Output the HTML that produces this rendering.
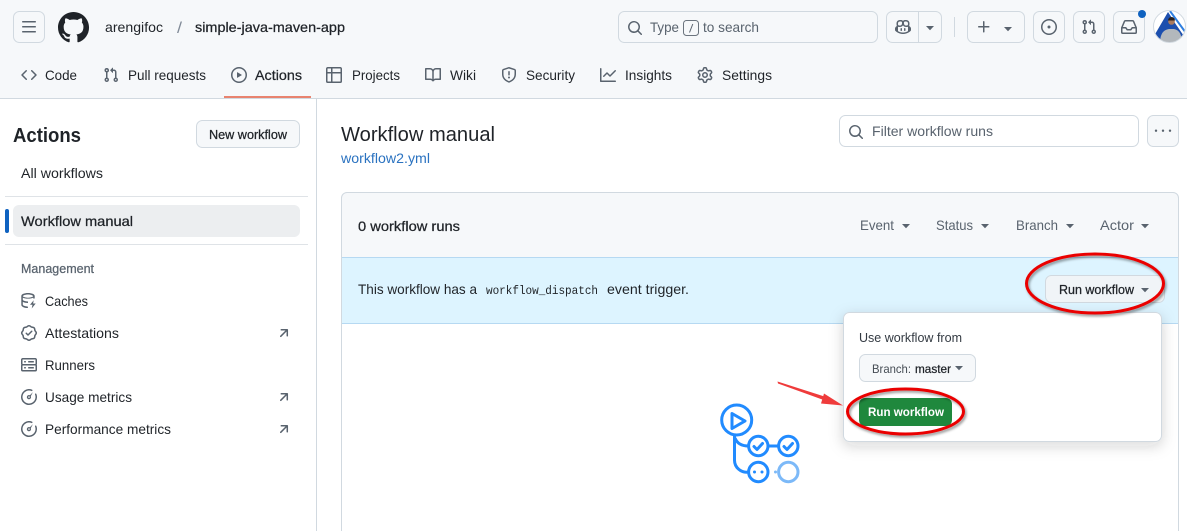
<!DOCTYPE html>
<html lang="en"><head><meta charset="utf-8"><title>Workflow manual</title>
<style>
html,body{margin:0;padding:0;background:#fff;width:1187px;height:531px;overflow:hidden}
svg{display:block}
text{font-family:"Liberation Sans",sans-serif;font-size:14px;fill:#1f2328}
.m{fill:#59636e}
.b{font-weight:700}
.md{stroke:#1f2328;stroke-width:.25}
.ic{fill:#59636e}
.btn{fill:#f6f8fa;stroke:#d1d9e0}
</style></head><body>
<svg width="1187" height="531" viewBox="0 0 1187 531" xmlns="http://www.w3.org/2000/svg">
<defs>
<path id="bars" d="M1 2.75A.75.75 0 0 1 1.75 2h12.5a.75.75 0 0 1 0 1.5H1.75A.75.75 0 0 1 1 2.75Zm0 5A.75.75 0 0 1 1.75 7h12.5a.75.75 0 0 1 0 1.5H1.75A.75.75 0 0 1 1 7.75ZM1.75 12h12.5a.75.75 0 0 1 0 1.5H1.75a.75.75 0 0 1 0-1.5Z"/>
<path id="gh" d="M8 0c4.42 0 8 3.58 8 8a8.013 8.013 0 0 1-5.45 7.59c-.4.08-.55-.17-.55-.38 0-.27.01-1.13.01-2.2 0-.75-.25-1.23-.54-1.48 1.78-.2 3.65-.88 3.65-3.95 0-.88-.31-1.59-.82-2.15.08-.2.36-1.02-.08-2.12 0 0-.67-.22-2.2.82-.64-.18-1.32-.27-2-.27-.68 0-1.36.09-2 .27-1.53-1.03-2.2-.82-2.2-.82-.44 1.1-.16 1.92-.08 2.12-.51.56-.82 1.28-.82 2.15 0 3.06 1.86 3.75 3.64 3.95-.23.2-.44.55-.51 1.07-.46.21-1.61.55-2.33-.66-.15-.24-.6-.83-1.23-.82-.67.01-.27.38.01.53.34.19.73.9.82 1.13.16.45.68 1.31 2.69.94 0 .67.01 1.3.01 1.49 0 .21-.15.45-.55.38A7.995 7.995 0 0 1 0 8c0-4.42 3.58-8 8-8Z"/>
<path id="code" d="m11.28 3.22 4.25 4.25a.75.75 0 0 1 0 1.06l-4.25 4.25a.749.749 0 0 1-1.275-.326.749.749 0 0 1 .215-.734L13.94 8l-3.72-3.72a.749.749 0 0 1 .326-1.275.749.749 0 0 1 .734.215Zm-6.56 0a.751.751 0 0 1 1.042.018.751.751 0 0 1 .018 1.042L2.06 8l3.72 3.72a.749.749 0 0 1-.326 1.275.749.749 0 0 1-.734-.215L.47 8.53a.75.75 0 0 1 0-1.06Z"/>
<path id="pr" d="M1.5 3.25a2.25 2.25 0 1 1 3 2.122v5.256a2.251 2.251 0 1 1-1.5 0V5.372A2.25 2.25 0 0 1 1.5 3.25Zm5.677-.177L9.573.677A.25.25 0 0 1 10 .854V2.5h1A2.5 2.5 0 0 1 13.5 5v5.628a2.251 2.251 0 1 1-1.5 0V5a1 1 0 0 0-1-1h-1v1.646a.25.25 0 0 1-.427.177L7.177 3.427a.25.25 0 0 1 0-.354ZM3.75 2.5a.75.75 0 1 0 0 1.5.75.75 0 0 0 0-1.5Zm0 9.5a.75.75 0 1 0 0 1.5.75.75 0 0 0 0-1.5Zm8.25.75a.75.75 0 1 0 1.5 0 .75.75 0 0 0-1.5 0Z"/>
<path id="play" d="M8 0a8 8 0 1 1 0 16A8 8 0 0 1 8 0ZM1.5 8a6.5 6.5 0 1 0 13 0 6.5 6.5 0 0 0-13 0Zm4.879-2.773 4.264 2.559a.25.25 0 0 1 0 .428l-4.264 2.559A.25.25 0 0 1 6 10.559V5.442a.25.25 0 0 1 .379-.215Z"/>
<path id="table" d="M0 1.75C0 .784.784 0 1.75 0h12.5C15.216 0 16 .784 16 1.75v12.5A1.75 1.75 0 0 1 14.25 16H1.75A1.75 1.75 0 0 1 0 14.25ZM6.5 6.5v8h7.75a.25.25 0 0 0 .25-.25V6.5Zm8-1.5V1.75a.25.25 0 0 0-.25-.25H6.5V5Zm-13 1.5v7.75c0 .138.112.25.25.25H5v-8ZM5 5V1.5H1.75a.25.25 0 0 0-.25.25V5Z"/>
<path id="book" d="M0 1.75A.75.75 0 0 1 .75 1h4.253c1.227 0 2.317.59 3 1.501A3.743 3.743 0 0 1 11.006 1h4.245a.75.75 0 0 1 .75.75v10.5a.75.75 0 0 1-.75.75h-4.507a2.25 2.25 0 0 0-1.591.659l-.622.621a.75.75 0 0 1-1.06 0l-.622-.621A2.25 2.25 0 0 0 5.258 13H.75a.75.75 0 0 1-.75-.75Zm7.251 10.324.004-5.073-.002-2.253A2.25 2.25 0 0 0 5.003 2.5H1.5v9h3.757a3.75 3.75 0 0 1 1.994.574ZM8.755 4.75l-.004 7.322a3.752 3.752 0 0 1 1.992-.572H14.5v-9h-3.495a2.25 2.25 0 0 0-2.25 2.25Z"/>
<path id="shield" d="M7.467.133a1.748 1.748 0 0 1 1.066 0l5.25 1.68A1.75 1.75 0 0 1 15 3.48V7c0 1.566-.32 3.182-1.303 4.682-.983 1.498-2.585 2.813-5.032 3.855a1.697 1.697 0 0 1-1.33 0c-2.447-1.042-4.049-2.357-5.032-3.855C1.32 10.182 1 8.566 1 7V3.48a1.75 1.75 0 0 1 1.217-1.667Zm.61 1.429a.25.25 0 0 0-.153 0l-5.25 1.68a.25.25 0 0 0-.174.238V7c0 1.358.275 2.666 1.057 3.86.784 1.194 2.121 2.34 4.366 3.297a.196.196 0 0 0 .154 0c2.245-.956 3.582-2.104 4.366-3.298C13.225 9.666 13.5 8.36 13.5 7V3.48a.251.251 0 0 0-.174-.237l-5.25-1.68ZM8.75 4.75v3a.75.75 0 0 1-1.5 0v-3a.75.75 0 0 1 1.5 0ZM9 10.5a1 1 0 1 1-2 0 1 1 0 0 1 2 0Z"/>
<path id="graph" d="M1.5 1.75V13.5h13.75a.75.75 0 0 1 0 1.5H.75a.75.75 0 0 1-.75-.75V1.75a.75.75 0 0 1 1.5 0Zm14.28 2.53-5.25 5.25a.75.75 0 0 1-1.06 0L7 7.06 4.28 9.78a.751.751 0 0 1-1.042-.018.751.751 0 0 1-.018-1.042l3.25-3.25a.75.75 0 0 1 1.06 0L10 7.94l4.72-4.72a.751.751 0 0 1 1.042.018.751.751 0 0 1 .018 1.042Z"/>
<path id="gear" d="M8 0a8.2 8.2 0 0 1 .701.031C9.444.095 9.99.645 10.16 1.29l.288 1.107c.018.066.079.158.212.224.231.114.454.243.668.386.123.082.233.09.299.071l1.103-.303c.644-.176 1.392.021 1.82.63.27.385.506.792.704 1.218.315.675.111 1.422-.364 1.891l-.814.806c-.049.048-.098.147-.088.294.016.257.016.515 0 .772-.01.147.038.246.088.294l.814.806c.475.469.679 1.216.364 1.891a7.977 7.977 0 0 1-.704 1.217c-.428.61-1.176.807-1.82.63l-1.102-.302c-.067-.019-.177-.011-.3.071a5.909 5.909 0 0 1-.668.386c-.133.066-.194.158-.211.224l-.29 1.106c-.168.646-.715 1.196-1.458 1.26a8.006 8.006 0 0 1-1.402 0c-.743-.064-1.289-.614-1.458-1.26l-.289-1.106c-.018-.066-.079-.158-.212-.224a5.738 5.738 0 0 1-.668-.386c-.123-.082-.233-.09-.299-.071l-1.103.303c-.644.176-1.392-.021-1.82-.63a8.12 8.12 0 0 1-.704-1.218c-.315-.675-.111-1.422.363-1.891l.815-.806c.05-.048.098-.147.088-.294a6.214 6.214 0 0 1 0-.772c.01-.147-.038-.246-.088-.294l-.815-.806C.635 6.045.431 5.298.746 4.623a7.92 7.92 0 0 1 .704-1.217c.428-.61 1.176-.807 1.82-.63l1.102.302c.067.019.177.011.3-.071.214-.143.437-.272.668-.386.133-.066.194-.158.211-.224l.29-1.106C6.009.645 6.556.095 7.299.03 7.53.01 7.764 0 8 0Zm-.571 1.525c-.036.003-.108.036-.137.146l-.289 1.105c-.147.561-.549.967-.998 1.189-.173.086-.34.183-.5.29-.417.278-.97.423-1.529.27l-1.103-.303c-.109-.03-.175.016-.195.045-.22.312-.412.644-.573.99-.014.031-.021.11.059.19l.815.806c.411.406.562.957.53 1.456a4.709 4.709 0 0 0 0 .582c.032.499-.119 1.05-.53 1.456l-.815.806c-.081.08-.073.159-.059.19.162.346.353.677.573.989.02.03.085.076.195.046l1.102-.303c.56-.153 1.113-.008 1.53.27.161.107.328.204.501.29.447.222.85.629.997 1.189l.289 1.105c.029.109.101.143.137.146a6.6 6.6 0 0 0 1.142 0c.036-.003.108-.036.137-.146l.289-1.105c.147-.561.549-.967.998-1.189.173-.086.34-.183.5-.29.417-.278.97-.423 1.529-.27l1.103.303c.109.029.175-.016.195-.045.22-.313.411-.644.573-.99.014-.031.021-.11-.059-.19l-.815-.806c-.411-.406-.562-.957-.53-1.456a4.709 4.709 0 0 0 0-.582c-.032-.499.119-1.05.53-1.456l.815-.806c.081-.08.073-.159.059-.19a6.464 6.464 0 0 0-.573-.989c-.02-.03-.085-.076-.195-.046l-1.102.303c-.56.153-1.113.008-1.53-.27a4.44 4.44 0 0 0-.501-.29c-.447-.222-.85-.629-.997-1.189l-.289-1.105c-.029-.11-.101-.143-.137-.146a6.6 6.6 0 0 0-1.142 0ZM11 8a3 3 0 1 1-6 0 3 3 0 0 1 6 0ZM9.5 8a1.5 1.5 0 1 0-3.001.001A1.5 1.5 0 0 0 9.5 8Z"/>
<path id="search" d="M10.68 11.74a6 6 0 0 1-7.922-8.982 6 6 0 0 1 8.982 7.922l3.04 3.04a.749.749 0 0 1-.326 1.275.749.749 0 0 1-.734-.215ZM11.5 7a4.499 4.499 0 1 0-8.997 0A4.499 4.499 0 0 0 11.5 7Z"/>
<path id="copilot" d="M7.998 15.035c-4.562 0-7.873-2.914-7.998-3.749V9.338c.085-.628.677-1.686 1.588-2.065.013-.07.024-.143.036-.218.029-.183.06-.384.126-.612-.201-.508-.254-1.084-.254-1.656 0-.87.128-1.769.693-2.484.579-.733 1.494-1.124 2.724-1.261 1.206-.134 2.262.034 2.944.765.05.053.096.108.139.165.044-.057.094-.112.143-.165.682-.731 1.738-.899 2.944-.765 1.23.137 2.145.528 2.724 1.261.566.715.693 1.614.693 2.484 0 .572-.053 1.148-.254 1.656.066.228.098.429.126.612.012.076.024.148.037.218.924.385 1.522 1.471 1.591 2.095v1.872c0 .766-3.351 3.795-8.002 3.795Zm0-1.485c2.28 0 4.584-1.11 5.002-1.433V7.862l-.023-.116c-.49.21-1.075.291-1.727.291-1.146 0-2.059-.327-2.71-.991A3.222 3.222 0 0 1 8 6.303a3.24 3.24 0 0 1-.544.743c-.65.664-1.563.991-2.71.991-.652 0-1.236-.081-1.727-.291l-.023.116v4.255c.419.323 2.722 1.433 5.002 1.433ZM6.762 2.83c-.193-.206-.637-.413-1.682-.297-1.019.113-1.479.404-1.713.7-.247.312-.369.789-.369 1.554 0 .793.129 1.171.308 1.371.162.181.519.379 1.442.379.853 0 1.339-.235 1.638-.54.315-.322.527-.827.617-1.553.117-.935-.037-1.395-.241-1.614Zm4.155-.297c-1.044-.116-1.488.091-1.681.297-.204.219-.359.679-.242 1.614.091.726.303 1.231.618 1.553.299.305.784.54 1.638.54.922 0 1.28-.198 1.442-.379.179-.2.308-.578.308-1.371 0-.765-.123-1.242-.37-1.554-.233-.296-.693-.587-1.713-.7ZM6.25 9.037a.75.75 0 0 1 .75.75v1.501a.75.75 0 0 1-1.5 0V9.787a.75.75 0 0 1 .75-.75Zm4.25.75v1.501a.75.75 0 0 1-1.5 0V9.787a.75.75 0 0 1 1.5 0Z"/>
<path id="plus" d="M7.75 2a.75.75 0 0 1 .75.75V7h4.25a.75.75 0 0 1 0 1.5H8.5v4.25a.75.75 0 0 1-1.5 0V8.5H2.75a.75.75 0 0 1 0-1.5H7V2.75A.75.75 0 0 1 7.75 2Z"/>
<path id="issue" d="M8 9.5a1.5 1.5 0 1 0 0-3 1.5 1.5 0 0 0 0 3ZM8 0a8 8 0 1 1 0 16A8 8 0 0 1 8 0ZM1.5 8a6.5 6.5 0 1 0 13 0 6.5 6.5 0 0 0-13 0Z"/>
<path id="inbox" d="M2.8 2.06A1.75 1.75 0 0 1 4.41 1h7.18c.7 0 1.333.417 1.61 1.06l2.74 6.395c.04.093.06.194.06.295v4.5A1.75 1.75 0 0 1 14.25 15H1.75A1.75 1.75 0 0 1 0 13.25v-4.5c0-.101.02-.202.06-.295Zm1.61.44a.25.25 0 0 0-.23.152L1.887 8H4.75a.75.75 0 0 1 .6.3L6.625 10h2.75l1.275-1.7a.75.75 0 0 1 .6-.3h2.863L11.82 2.652a.25.25 0 0 0-.23-.152Zm10.09 7h-2.875l-1.275 1.7a.75.75 0 0 1-.6.3h-3.5a.75.75 0 0 1-.6-.3L4.375 9.5H1.5v3.75c0 .138.112.25.25.25h12.5a.25.25 0 0 0 .25-.25Z"/>
<path id="verified" d="M9.585.52a2.678 2.678 0 0 0-3.17 0l-.928.68a1.178 1.178 0 0 1-.518.215L3.83 1.59a2.678 2.678 0 0 0-2.24 2.24l-.175 1.14a1.178 1.178 0 0 1-.215.518l-.68.928a2.678 2.678 0 0 0 0 3.17l.68.928c.113.153.186.33.215.518l.175 1.138a2.678 2.678 0 0 0 2.24 2.24l1.138.175c.187.029.365.102.518.215l.928.68a2.678 2.678 0 0 0 3.17 0l.928-.68a1.17 1.17 0 0 1 .518-.215l1.138-.175a2.678 2.678 0 0 0 2.241-2.241l.175-1.138c.029-.187.102-.365.215-.518l.68-.928a2.678 2.678 0 0 0 0-3.17l-.68-.928a1.179 1.179 0 0 1-.215-.518L14.41 3.83a2.678 2.678 0 0 0-2.24-2.24l-1.138-.175a1.179 1.179 0 0 1-.518-.215L9.585.52ZM7.303 1.728c.415-.305.98-.305 1.394 0l.928.68c.348.256.752.423 1.18.489l1.136.174c.51.078.909.478.987.987l.174 1.137c.066.427.233.831.489 1.18l.68.927c.305.415.305.98 0 1.394l-.68.928a2.678 2.678 0 0 0-.489 1.18l-.174 1.136a1.178 1.178 0 0 1-.987.987l-1.137.174a2.678 2.678 0 0 0-1.18.489l-.927.68c-.415.305-.98.305-1.394 0l-.928-.68a2.678 2.678 0 0 0-1.18-.489l-1.136-.174a1.178 1.178 0 0 1-.987-.987l-.174-1.137a2.678 2.678 0 0 0-.489-1.18l-.68-.927a1.178 1.178 0 0 1 0-1.394l.68-.928c.256-.348.423-.752.489-1.18l.174-1.136c.078-.51.478-.909.987-.987l1.137-.174a2.678 2.678 0 0 0 1.18-.489l.927-.68ZM11.28 6.78a.75.75 0 0 0-1.06-1.06L7 8.94 5.78 7.72a.75.75 0 0 0-1.06 1.06l1.75 1.75a.75.75 0 0 0 1.06 0l3.75-3.75Z"/>
<path id="server" d="M1.75 1h12.5c.966 0 1.75.784 1.75 1.75v4c0 .372-.116.717-.314 1 .198.283.314.628.314 1v4a1.75 1.75 0 0 1-1.75 1.75H1.75A1.75 1.75 0 0 1 0 12.75v-4c0-.358.109-.707.314-1a1.739 1.739 0 0 1-.314-1v-4C0 1.784.784 1 1.75 1ZM1.5 2.75v4c0 .138.112.25.25.25h12.5a.25.25 0 0 0 .25-.25v-4a.25.25 0 0 0-.25-.25H1.75a.25.25 0 0 0-.25.25Zm.25 5.75a.25.25 0 0 0-.25.25v4c0 .138.112.25.25.25h12.5a.25.25 0 0 0 .25-.25v-4a.25.25 0 0 0-.25-.25ZM7 4.75A.75.75 0 0 1 7.75 4h4.5a.75.75 0 0 1 0 1.5h-4.5A.75.75 0 0 1 7 4.75ZM7.75 10h4.5a.75.75 0 0 1 0 1.5h-4.5a.75.75 0 0 1 0-1.5ZM3 4.75A.75.75 0 0 1 3.75 4h.5a.75.75 0 0 1 0 1.5h-.5A.75.75 0 0 1 3 4.75ZM3.75 10h.5a.75.75 0 0 1 0 1.5h-.5a.75.75 0 0 1 0-1.5Z"/>
<g id="meter"><path d="M8 1.5a6.5 6.5 0 1 0 6.016 4.035.75.75 0 0 1 1.388-.57A8 8 0 1 1 11.035.596a.75.75 0 1 1-.57 1.388A6.48 6.48 0 0 0 8 1.5Z"/><path d="M11.9 3.1 8.9 6.3a2.1 2.1 0 1 0 .9.9ZM8 7.3a.8.8 0 1 1 0 1.6.8.8 0 0 1 0-1.6Z"/></g>
<g id="cache"><path d="M7 0c1.8 0 3.4.3 4.6.8 1.1.5 2.1 1.2 2.1 2.3v2.4h-1.5V4.6c-1.2.7-3.1 1-5.2 1s-4-.3-5.2-1v2.2c0 .2.3.6 1.2 1 1 .4 2.4.7 4 .7v1.5c-2 0-3.9-.4-5.2-1.1v2.9c0 .2.3.6 1.2 1 .9.4 2.2.7 3.7.7l.3 1.5c-1.8 0-3.3-.3-4.6-.8C1.3 13.700.3 13 .3 11.900V3.100C.3 2 1.300 1.300 2.400.8 3.600.3 5.200 0 7 0Zm0 1.500c-1.600 0-3 .3-4 .7-.9.4-1.200.8-1.200.9s.3.5 1.200.9c1 .4 2.400.7 4 .7s3-.3 4-.7c.9-.4 1.200-.8 1.200-.9s-.3-.5-1.200-.9c-1-.4-2.400-.7-4-.7Z"/><path d="M12.700 7.200 9 11.800h2.500l-.8 3.700 4-5h-2.600Z"/></g>
<path id="arr" d="M4.530 4.750A.75.75 0 0 1 5.280 4h6.010a.75.75 0 0 1 .75.75v6.010a.75.75 0 0 1-1.500 0v-4.200l-5.260 5.261a.749.749 0 0 1-1.275-.326.749.749 0 0 1 .215-.734L9.480 5.500h-4.200a.75.75 0 0 1-.75-.75Z"/>
<path id="caret" d="M0 0h8L4 4.300Z"/>
<filter id="pop" x="-10%" y="-10%" width="120%" height="125%"><feDropShadow dx="0" dy="4" stdDeviation="7" flood-color="#25292e" flood-opacity=".18"/></filter>
<filter id="rs" x="-10%" y="-15%" width="120%" height="135%"><feDropShadow dx="1.500" dy="2" stdDeviation="1.200" flood-color="#000" flood-opacity=".4"/></filter>
<clipPath id="av"><circle cx="1169.500" cy="26.500" r="16"/></clipPath>
<clipPath id="boxc"><path d="M341 531V198a6 6 0 0 1 6-6h826a6 6 0 0 1 6 6v333Z"/></clipPath>
</defs>

<!-- header -->
<rect width="1187" height="98" fill="#f6f8fa"/>
<rect y="98" width="1187" height="1" fill="#d1d9e0"/>
<rect x="13.500" y="11.500" width="31" height="31" rx="6" class="btn"/>
<use href="#bars" x="21" y="19" class="ic"/>
<use href="#gh" transform="translate(58 12) scale(1.94)" fill="#1f2328"/>
<text x="105" y="32" textLength="58" lengthAdjust="spacingAndGlyphs">arengifoc</text>
<text x="177" y="33" textLength="5" lengthAdjust="spacingAndGlyphs" style="font-size:16px;fill:#818b98">/</text>
<text x="195" y="32" textLength="150" lengthAdjust="spacingAndGlyphs" class="md">simple-java-maven-app</text>

<!-- tabs -->
<use href="#code" x="21" y="67" class="ic"/><text x="45" y="80" textLength="32" lengthAdjust="spacingAndGlyphs">Code</text>
<use href="#pr" x="103" y="67" class="ic"/><text x="128" y="80" textLength="78" lengthAdjust="spacingAndGlyphs">Pull requests</text>
<use href="#play" x="231" y="67" class="ic"/><text x="255" y="80" textLength="47" lengthAdjust="spacingAndGlyphs" class="md">Actions</text>
<rect x="224" y="96" width="87" height="2" fill="#e8836f"/>
<use href="#table" x="326" y="67" class="ic"/><text x="352" y="80" textLength="48" lengthAdjust="spacingAndGlyphs">Projects</text>
<use href="#book" x="425" y="67" class="ic"/><text x="450" y="80" textLength="26" lengthAdjust="spacingAndGlyphs">Wiki</text>
<use href="#shield" x="501" y="67" class="ic"/><text x="526" y="80" textLength="49" lengthAdjust="spacingAndGlyphs">Security</text>
<use href="#graph" x="600" y="67" class="ic"/><text x="625" y="80" textLength="47" lengthAdjust="spacingAndGlyphs">Insights</text>
<use href="#gear" x="697" y="67" class="ic"/><text x="722" y="80" textLength="50" lengthAdjust="spacingAndGlyphs">Settings</text>

<!-- search -->
<rect x="618.500" y="11.500" width="259" height="31" rx="6" fill="#f6f8fa" stroke="#d1d9e0"/>
<use href="#search" x="627" y="20" class="ic"/>
<text x="650" y="32" textLength="29" lengthAdjust="spacingAndGlyphs" class="m">Type</text>
<rect x="683.500" y="20.500" width="15" height="15" rx="3" fill="none" stroke="#6b747e"/>
<path d="M692.800 24 689.500 32.500" stroke="#59636e" fill="none"/>
<text x="703" y="32" textLength="56" lengthAdjust="spacingAndGlyphs" class="m">to search</text>

<!-- copilot -->
<rect x="886.500" y="11.500" width="55" height="31" rx="6" class="btn"/>
<rect x="918" y="12" width="1" height="30" fill="#d1d9e0"/>
<use href="#copilot" x="895" y="19" class="ic"/>
<use href="#caret" x="926" y="26" class="ic"/>
<rect x="954" y="17" width="1" height="20" fill="#d1d9e0"/>
<rect x="967.500" y="11.500" width="57" height="31" rx="6" class="btn"/>
<use href="#plus" x="976" y="19" class="ic"/>
<use href="#caret" x="1004" y="27" class="ic"/>
<rect x="1033.500" y="11.500" width="31" height="31" rx="6" class="btn"/>
<use href="#issue" x="1041" y="19" class="ic"/>
<rect x="1073.500" y="11.500" width="31" height="31" rx="6" class="btn"/>
<use href="#pr" x="1081" y="19" class="ic"/>
<rect x="1113.500" y="11.500" width="31" height="31" rx="6" class="btn"/>
<use href="#inbox" x="1121" y="19" class="ic"/>
<circle cx="1142" cy="14" r="4" fill="#0f62c0"/>

<!-- avatar -->
<circle cx="1169.500" cy="26.500" r="16" fill="#fff"/>
<g clip-path="url(#av)">
<path d="M1154 36 1168 12 1184 36 1170 44Z" fill="#1c4fae"/>
<path d="M1170 11 1186 33" stroke="#2f7fe0" stroke-width="2"/>
<path d="M1175 22 1184 35" stroke="#fff" stroke-width="1.200"/>
<path d="M1160 44c0-10 3-14 9-15h5c5 1 8 5 8 15Z" fill="#b3b8bc"/>
<circle cx="1171.500" cy="21.500" r="3.300" fill="#a97a5e"/>
<path d="M1168 20.500a3.500 3.500 0 0 1 7 0Z" fill="#2a211c"/>
</g>
<circle cx="1169.500" cy="26.500" r="16" fill="none" stroke="#d1d9e0"/>

<!-- sidebar -->
<rect x="316" y="99" width="1" height="432" fill="#d1d9e0"/>
<text x="13" y="142" textLength="68" lengthAdjust="spacingAndGlyphs" class="b" style="font-size:20px">Actions</text>
<rect x="196.500" y="120.500" width="103" height="27" rx="6" class="btn"/>
<text x="209" y="139" textLength="78" lengthAdjust="spacingAndGlyphs" class="md" style="font-size:12.500px">New workflow</text>
<text x="21" y="178" textLength="82" lengthAdjust="spacingAndGlyphs">All workflows</text>
<rect x="5" y="196" width="303" height="1" fill="#dfe3e7"/>
<rect x="13" y="205" width="287" height="32" rx="6" fill="#eceef0"/>
<rect x="5" y="209" width="4" height="24" rx="2" fill="#0f62c0"/>
<text x="21" y="226" textLength="112" lengthAdjust="spacingAndGlyphs" class="md">Workflow manual</text>
<rect x="5" y="244" width="303" height="1" fill="#dfe3e7"/>
<text x="21" y="273" textLength="73" lengthAdjust="spacingAndGlyphs" class="m" style="font-size:12.500px;stroke:#59636e;stroke-width:.25">Management</text>

<use href="#cache" x="21" y="293" class="ic"/><text x="45" y="306" textLength="43" lengthAdjust="spacingAndGlyphs">Caches</text>
<use href="#verified" x="21" y="325" class="ic"/><text x="45" y="338" textLength="74" lengthAdjust="spacingAndGlyphs">Attestations</text>
<use href="#arr" x="276" y="325" class="ic"/>
<use href="#server" x="21" y="357" class="ic"/><text x="45" y="370" textLength="50" lengthAdjust="spacingAndGlyphs">Runners</text>
<use href="#meter" x="21" y="389" class="ic"/><text x="45" y="402" textLength="87" lengthAdjust="spacingAndGlyphs">Usage metrics</text>
<use href="#arr" x="276" y="389" class="ic"/>
<use href="#meter" x="21" y="421" class="ic"/><text x="45" y="434" textLength="126" lengthAdjust="spacingAndGlyphs">Performance metrics</text>
<use href="#arr" x="276" y="421" class="ic"/>

<!-- main title -->
<text x="341" y="141" textLength="154" lengthAdjust="spacingAndGlyphs" style="font-size:20px">Workflow manual</text>
<text x="341" y="163" textLength="89" lengthAdjust="spacingAndGlyphs" style="fill:#2a72c0">workflow2.yml</text>
<rect x="839.500" y="115.500" width="299" height="31" rx="6" fill="#fff" stroke="#d1d9e0"/>
<use href="#search" x="848" y="124" class="ic"/>
<text x="872" y="136" textLength="121" lengthAdjust="spacingAndGlyphs" class="m">Filter workflow runs</text>
<rect x="1147.500" y="115.500" width="31" height="31" rx="6" class="btn"/>
<circle cx="1156" cy="130.700" r="1.200" class="ic"/><circle cx="1163" cy="130.700" r="1.200" class="ic"/><circle cx="1170" cy="130.700" r="1.200" class="ic"/>

<!-- box -->
<g clip-path="url(#boxc)">
<rect x="341" y="192" width="838" height="65" fill="#f6f8fa"/>
<rect x="341" y="257" width="838" height="66" fill="#ddf4ff"/>
<rect x="341" y="257" width="838" height="1" fill="#b6d9f2"/>
<rect x="341" y="323" width="838" height="1" fill="#b6d9f2"/>
</g>
<path d="M341.500 531V198a5.500 5.500 0 0 1 5.500-5.500h826a5.500 5.500 0 0 1 5.500 5.500v333" fill="none" stroke="#d1d9e0"/>
<text x="358" y="231" textLength="102" lengthAdjust="spacingAndGlyphs" class="md">0 workflow runs</text>
<text x="860" y="230" textLength="34" lengthAdjust="spacingAndGlyphs" class="m">Event</text><use href="#caret" x="902" y="224" class="ic"/>
<text x="936" y="230" textLength="37" lengthAdjust="spacingAndGlyphs" class="m">Status</text><use href="#caret" x="981" y="224" class="ic"/>
<text x="1016" y="230" textLength="42" lengthAdjust="spacingAndGlyphs" class="m">Branch</text><use href="#caret" x="1066" y="224" class="ic"/>
<text x="1100" y="230" textLength="34" lengthAdjust="spacingAndGlyphs" class="m">Actor</text><use href="#caret" x="1141" y="224" class="ic"/>

<text x="358" y="294" textLength="119" lengthAdjust="spacingAndGlyphs">This workflow has a</text>
<text x="486" y="294" textLength="112" lengthAdjust="spacingAndGlyphs" style="font-family:'Liberation Mono',monospace;font-size:12px">workflow_dispatch</text>
<text x="607" y="294" textLength="82" lengthAdjust="spacingAndGlyphs">event trigger.</text>

<!-- run workflow button -->
<rect x="1045.500" y="275.500" width="119" height="27" rx="6" fill="#f0f4f7" stroke="#d1d9e0"/>
<text x="1059" y="294" textLength="75" lengthAdjust="spacingAndGlyphs" class="md" style="font-size:12.500px">Run workflow</text>
<use href="#caret" x="1141" y="288" class="ic"/>

<!-- workflow illustration -->
<g fill="none" stroke="#218bff" stroke-width="3">
<circle cx="736.700" cy="420" r="15"/>
<path d="M732 413.500 745 421 732 428.500Z" stroke-linejoin="round"/>
<circle cx="758.300" cy="446" r="9.700"/>
<circle cx="788.300" cy="446" r="9.700"/>
<circle cx="758.300" cy="472" r="9.700"/>
<path d="M734.500 435V460a12 12 0 0 0 14 12M735 438q3 8 13.500 8M768 446h10.500"/>
<path d="M754 446.500l3 3 5.500-6M784 446.500l3 3 5.500-6" stroke-linecap="round" stroke-linejoin="round"/>
<circle cx="788.300" cy="472" r="9.700" stroke="#7cb9f8"/>
<circle cx="775.500" cy="472" r="1.500" fill="#7cb9f8" stroke="none"/>
</g>
<circle cx="754.500" cy="472" r="1.500" fill="#218bff"/><circle cx="762" cy="472" r="1.500" fill="#218bff"/>

<!-- popover -->
<rect x="843.500" y="312.500" width="318" height="129" rx="6" fill="#fff" stroke="#d1d9e0" filter="url(#pop)"/>
<text x="859" y="342" textLength="103" lengthAdjust="spacingAndGlyphs" style="font-size:12.500px;fill:#333a42">Use workflow from</text>
<rect x="859.500" y="354.500" width="116" height="27" rx="6" class="btn"/>
<text x="872" y="373" textLength="39" lengthAdjust="spacingAndGlyphs" style="font-size:12px;fill:#454c54">Branch:</text>
<text x="915" y="373" textLength="36" lengthAdjust="spacingAndGlyphs" class="md" style="font-size:12px">master</text>
<use href="#caret" x="955" y="366" class="ic"/>
<rect x="859" y="398" width="93" height="28" rx="6" fill="#1f883d"/>
<text x="868" y="416" textLength="76" lengthAdjust="spacingAndGlyphs" class="b" style="font-size:12px;fill:#fff">Run workflow</text>

<!-- annotations -->
<g fill="none" stroke="#ea0000" stroke-width="3" filter="url(#rs)">
<ellipse cx="1095" cy="283.500" rx="68.500" ry="29.500"/>
<ellipse cx="905.500" cy="411.500" rx="58" ry="22.500"/>
</g>
<path d="M777.500 381.500 778 383.500 825 400.500 826 397Z" fill="#ef3b3b"/>
<path d="M843 405.500 821 403.500 824 393.500Z" fill="#ef3b3b"/>
</svg>
</body></html>
